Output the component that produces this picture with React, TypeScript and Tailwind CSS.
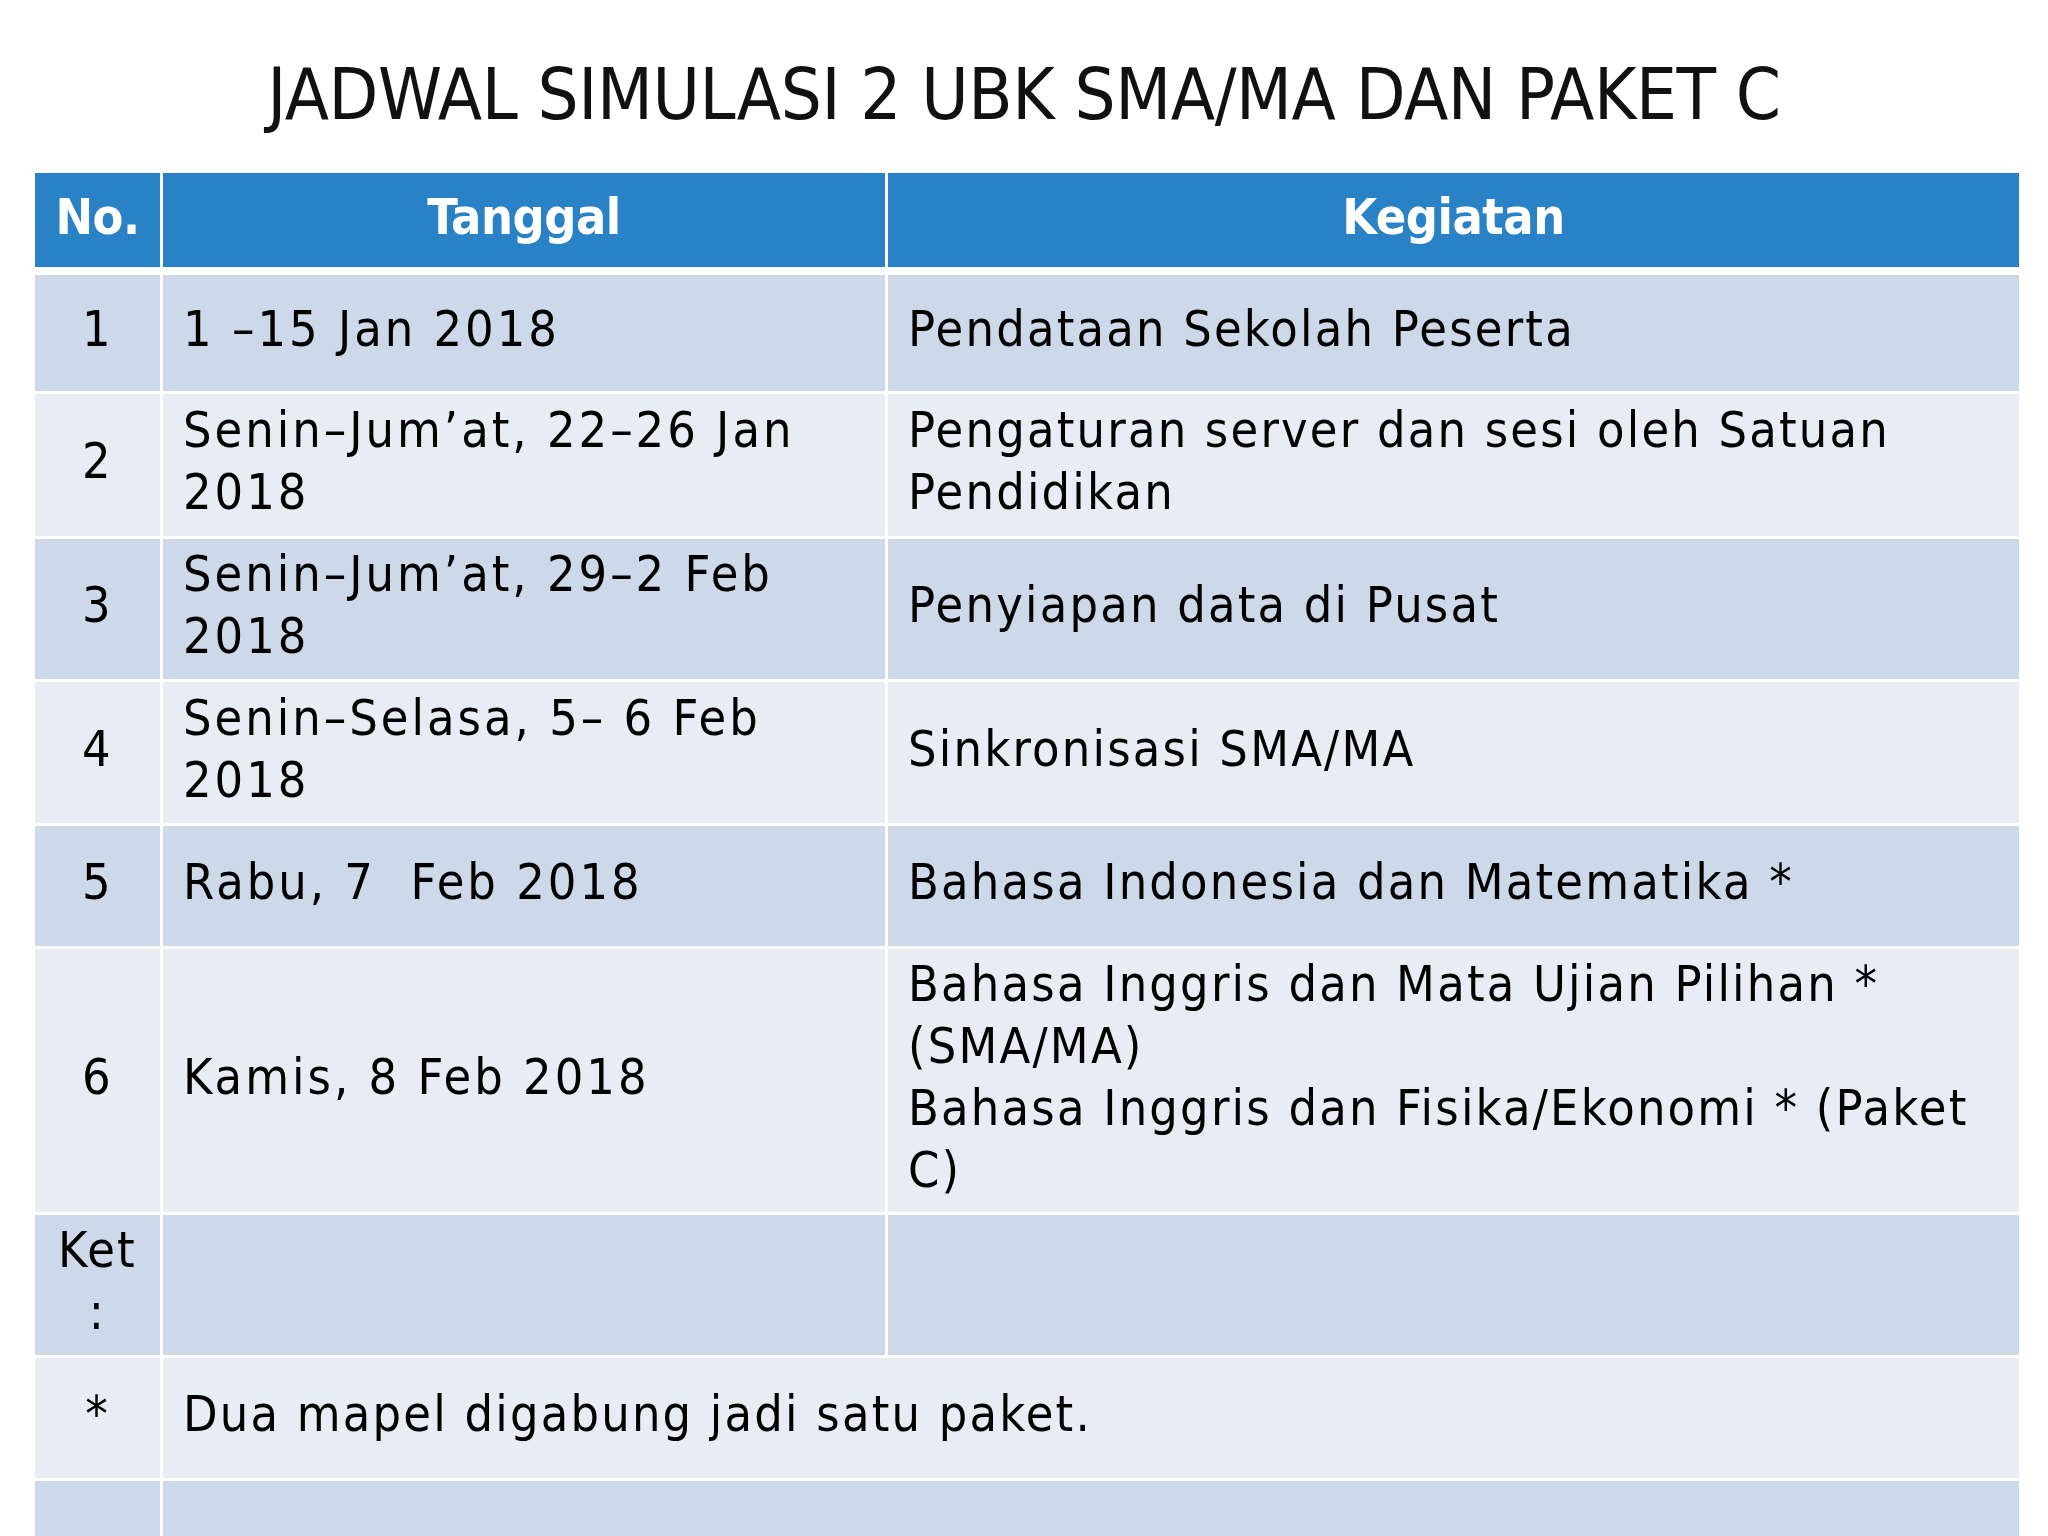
import type { ReactNode } from "react"

type Row = {
  no: ReactNode
  date?: ReactNode
  act?: ReactNode
  note?: ReactNode
  h: string
  dark: boolean
}

const rows: Row[] = [
  {
    no: "1",
    date: "1 –15 Jan 2018",
    act: "Pendataan Sekolah Peserta",
    h: "h-[116px]",
    dark: true,
  },
  {
    no: "2",
    date: (
      <>
        Senin–Jum’at, 22–26 Jan
        <br />
        2018
      </>
    ),
    act: (
      <>
        Pengaturan server dan sesi oleh Satuan
        <br />
        Pendidikan
      </>
    ),
    h: "h-[142px]",
    dark: false,
  },
  {
    no: "3",
    date: (
      <>
        Senin–Jum’at, 29–2 Feb
        <br />
        2018
      </>
    ),
    act: "Penyiapan data di Pusat",
    h: "h-[140px]",
    dark: true,
  },
  {
    no: "4",
    date: (
      <>
        Senin–Selasa, 5– 6 Feb
        <br />
        2018
      </>
    ),
    act: "Sinkronisasi SMA/MA",
    h: "h-[141px]",
    dark: false,
  },
  {
    no: "5",
    date: "Rabu, 7\u00a0 Feb 2018",
    act: "Bahasa Indonesia dan Matematika *",
    h: "h-[120px]",
    dark: true,
  },
  {
    no: "6",
    date: "Kamis, 8 Feb 2018",
    act: (
      <>
        Bahasa Inggris dan Mata Ujian Pilihan *
        <br />
        (SMA/MA)
        <br />
        Bahasa Inggris dan Fisika/Ekonomi * (Paket
        <br />
        C)
      </>
    ),
    h: "h-[263px]",
    dark: false,
  },
  {
    no: (
      <>
        Ket
        <br />:
      </>
    ),
    date: "",
    act: "",
    h: "h-[140px]",
    dark: true,
  },
  {
    no: "*",
    note: "Dua mapel digabung jadi satu paket.",
    h: "h-[120px]",
    dark: false,
  },
  {
    no: "",
    note: "",
    h: "h-[120px]",
    dark: true,
  },
]

const body = { fontFamily: '"DejaVu Sans Condensed", "DejaVu Sans", sans-serif' }

export default function App() {
  return (
    <div className="h-[1536px] w-[2048px] overflow-hidden bg-white text-black" style={body}>
      <h1 className="pt-[51px] text-center text-[72px] font-normal leading-[86px] tracking-[-0.4px] text-[#111]">
        JADWAL SIMULASI 2 UBK SMA/MA DAN PAKET C
      </h1>

      <div className="ml-[35px] mt-[36px] w-[1984px]">
        {/* header */}
        <div className="mb-[8px] grid h-[94px] grid-cols-[125px_722px_1131px] gap-x-[3px] text-[50px] font-bold tracking-[-0.5px] text-white">
          <div className="flex items-center justify-center bg-[#2a82c6] pb-[6px]">No.</div>
          <div className="flex items-center justify-center bg-[#2a82c6] pb-[6px]">Tanggal</div>
          <div className="flex items-center justify-center bg-[#2a82c6] pb-[6px]">Kegiatan</div>
        </div>

        <div className="grid grid-cols-[125px_722px_1131px] gap-[3px] text-[50px] leading-[62px] tracking-[2.2px]">
          {rows.map((r, i) => {
            const bg = r.dark ? "bg-[#cdd8e9]" : "bg-[#e8ecf4]"
            return (
              <div key={i} className="contents">
                <div className={`${r.h} ${bg} flex items-center justify-center pb-[8px] text-center`}>
                  {r.no}
                </div>
                {r.note !== undefined ? (
                  <div className={`${bg} col-span-2 flex items-center pb-[8px] pl-[20px]`}>{r.note}</div>
                ) : (
                  <>
                    <div className={`${bg} flex items-center pb-[8px] pl-[20px] tracking-[3px]`}>
                      <span>{r.date}</span>
                    </div>
                    <div className={`${bg} flex items-center pb-[8px] pl-[20px]`}>
                      <span>{r.act}</span>
                    </div>
                  </>
                )}
              </div>
            )
          })}
        </div>
      </div>
    </div>
  )
}
